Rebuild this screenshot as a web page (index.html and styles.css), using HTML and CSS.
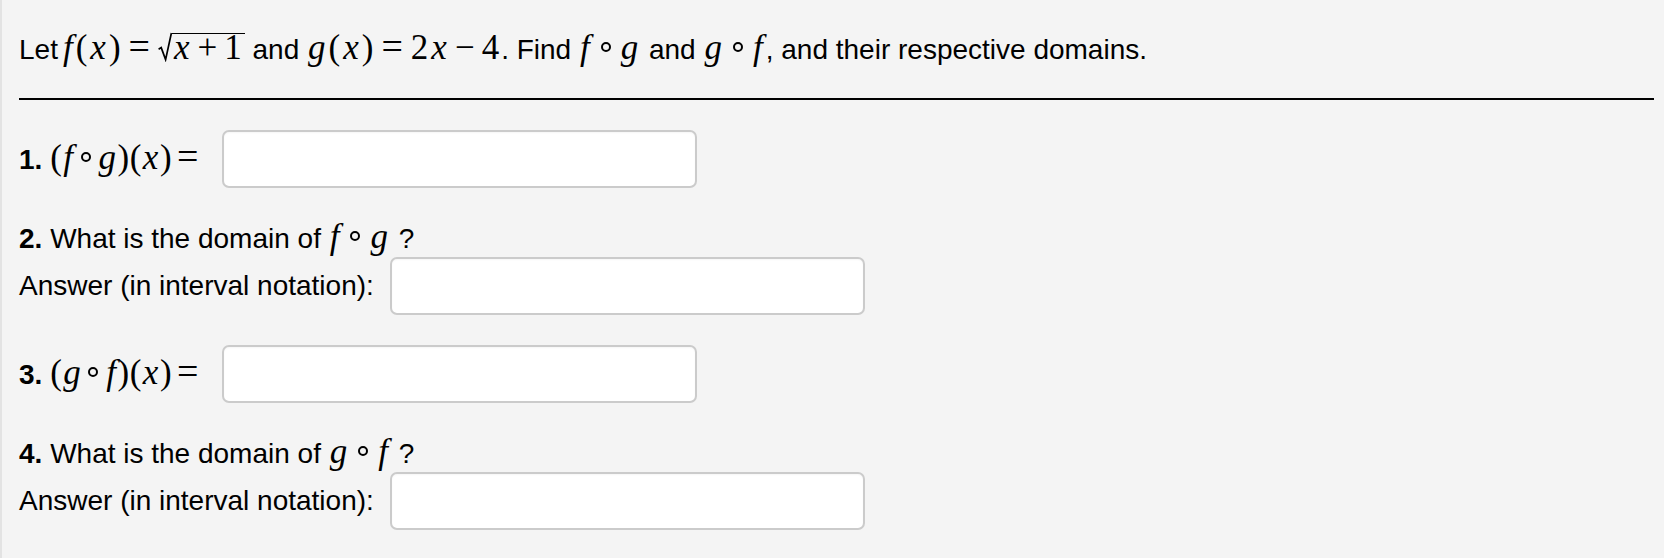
FILE: index.html
```html
<!DOCTYPE html>
<html lang="en">
<head>
<meta charset="utf-8">
<title>Composition of functions</title>
<link rel="stylesheet" href="styles.css">
</head>
<body>
<div class="page">
  <p class="intro">Let<span class="m lead"><i>f</i>(<i>x</i>)<span class="rel">=</span><span class="sqrt"><svg class="surd" width="14" height="30" viewBox="0 0 14 30"><path d="M0.6 17.2 L3.2 15.6 L7.6 27.6 L13.4 1" fill="none" stroke="#000" stroke-width="1.7" stroke-linejoin="miter"/></svg><span class="radicand"><i>x</i><span class="bin">+</span>1</span></span></span> and <span class="m"><i>g</i>(<i>x</i>)<span class="rel">=</span>2<i>x</i><span class="bin">−</span>4</span>. Find <span class="m"><i>f</i><span class="comp"></span><i>g</i></span> and <span class="m"><i>g</i><span class="comp"></span><i>f</i></span>, and their respective domains.</p>
  <hr class="rule">

  <div class="row first">
    <span class="label"><b>1.</b> <span class="m tight">(<i>f</i><span class="comp"></span><i>g</i>)(<i>x</i>)<span class="rel">=</span></span></span>
    <input class="field" type="text" aria-label="(f∘g)(x)">
  </div>

  <p class="question"><b>2.</b> What is the domain of <span class="m"><i>f</i><span class="comp"></span><i>g</i></span> ?</p>
  <div class="row answer">
    <span class="label">Answer (in interval notation):</span>
    <input class="field" type="text" aria-label="Domain of f∘g">
  </div>

  <div class="row third">
    <span class="label"><b>3.</b> <span class="m tight">(<i>g</i><span class="comp"></span><i>f</i>)(<i>x</i>)<span class="rel">=</span></span></span>
    <input class="field" type="text" aria-label="(g∘f)(x)">
  </div>

  <p class="question"><b>4.</b> What is the domain of <span class="m"><i>g</i><span class="comp"></span><i>f</i></span> ?</p>
  <div class="row answer">
    <span class="label">Answer (in interval notation):</span>
    <input class="field" type="text" aria-label="Domain of g∘f">
  </div>
</div>
</body>
</html>
```

FILE: styles.css
```css
html, body {
  margin: 0;
  padding: 0;
  background: #f4f4f4;
}

.page {
  box-sizing: border-box;
  min-height: 558px;
  border-left: 2px solid #e3e3e3;
  padding: 32px 10px 0 17px;
  font-family: "Liberation Sans", Arial, Helvetica, sans-serif;
  font-size: 28px;
  line-height: 34px;
  color: #000;
}

.intro {
  margin: 0;
  white-space: nowrap;
}

.rule {
  border: 0;
  height: 2px;
  background: #000;
  margin: 31px 0 0;
}

.m {
  font-family: "Liberation Serif", "Times New Roman", serif;
  font-size: 35px;
  line-height: 28px;
  letter-spacing: 2px;
  white-space: nowrap;
}

.m.lead {
  margin-left: 4px;
}

.m.tight {
  letter-spacing: 0.5px;
}

.m i {
  font-family: "Liberation Serif", "Times New Roman", serif;
  font-style: italic;
  padding: 0 1px;
}

.rel {
  margin: 0 6px;
  font-size: 38px;
}

.m.tight .rel {
  margin: 0 5px;
}

.bin {
  margin: 0 5px;
}

.comp {
  display: inline-block;
  box-sizing: border-box;
  width: 10px;
  height: 10px;
  border: 2px solid #000;
  border-radius: 50%;
  margin: 0 9px 0 8px;
  vertical-align: 7px;
}

.m.tight .comp {
  margin: 0 7px 0 6px;
}

.sqrt {
  white-space: nowrap;
}

.surd {
  vertical-align: -3px;
}

.radicand {
  display: inline-block;
  line-height: 27px;
  border-top: 1.7px solid #000;
  padding: 0 1px 0 1px;
}

.row {
  display: flex;
  align-items: center;
  gap: 18px;
}

.row.first {
  margin-top: 30px;
}

.row.third {
  margin-top: 30px;
}

.row.answer {
  margin-top: 1px;
  gap: 16px;
}

.question {
  margin: 34px 0 0;
}

.field {
  box-sizing: border-box;
  width: 475px;
  height: 58px;
  margin: 0;
  padding: 0 10px;
  background: #fff;
  border: 2px solid #cbcbcb;
  border-radius: 7px;
  box-shadow: inset 0 1px 2px rgba(0, 0, 0, 0.04);
  font: inherit;
  outline: none;
}
```
